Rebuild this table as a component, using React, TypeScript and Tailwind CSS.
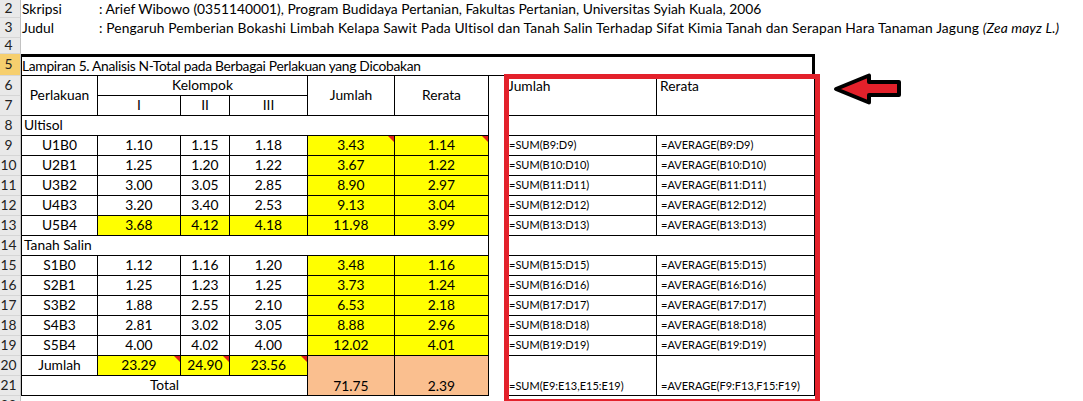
import React from "react";

type Row = [string, string, string, string, string, string];

const ultisol: Row[] = [
  ["U1B0", "1.10", "1.15", "1.18", "3.43", "1.14"],
  ["U2B1", "1.25", "1.20", "1.22", "3.67", "1.22"],
  ["U3B2", "3.00", "3.05", "2.85", "8.90", "2.97"],
  ["U4B3", "3.20", "3.40", "2.53", "9.13", "3.04"],
  ["U5B4", "3.68", "4.12", "4.18", "11.98", "3.99"],
];

const salin: Row[] = [
  ["S1B0", "1.12", "1.16", "1.20", "3.48", "1.16"],
  ["S2B1", "1.25", "1.23", "1.25", "3.73", "1.24"],
  ["S3B2", "1.88", "2.55", "2.10", "6.53", "2.18"],
  ["S4B3", "2.81", "3.02", "3.05", "8.88", "2.96"],
  ["S5B4", "4.00", "4.02", "4.00", "12.02", "4.01"],
];

const cell = "flex items-center justify-center border-r border-b border-black";
const aCell = "flex items-center justify-center border-l border-r border-b border-black";
const fCell = "flex items-center pl-[4px] text-[11px] whitespace-nowrap border-r border-b border-black";
const yellow = "bg-[#ffff00]";

const Tri = () => (
  <span className="absolute right-0 top-0 h-0 w-0 border-l-[6px] border-t-[6px] border-l-transparent border-t-[#e0201c]" />
);

function Hdr({ n, hl = false }: { n: number; hl?: boolean }) {
  return (
    <div
      className={
        hl
          ? "flex items-center justify-center pr-[3px] text-[#222] bg-[#f6cf6e] border-r border-b border-r-[#c2c2c2] border-b-[#d6d6d6]"
          : "flex items-center justify-center pr-[3px] text-[#222] bg-[#e9e9e9] border-r border-b border-r-[#c2c2c2] border-b-[#d6d6d6]"
      }
    >
      {n}
    </div>
  );
}

function DataRow({ r, d, yb, comment }: { r: number; d: Row; yb?: boolean; comment?: boolean }) {
  return (
    <>
      <Hdr n={r} />
      <div className={aCell}>{d[0]}</div>
      <div className={yb ? `${cell} ${yellow}` : cell}>{d[1]}</div>
      <div className={yb ? `${cell} ${yellow}` : cell}>{d[2]}</div>
      <div className={yb ? `${cell} ${yellow}` : cell}>{d[3]}</div>
      <div className={`${cell} ${yellow} relative`}>
        {d[4]}
        {comment && <Tri />}
      </div>
      <div className={`${cell} ${yellow} relative`}>
        {d[5]}
        {comment && <Tri />}
      </div>
      <div />
      <div className={fCell}>{`=SUM(B${r}:D${r})`}</div>
      <div className={fCell}>{`=AVERAGE(B${r}:D${r})`}</div>
      <div />
    </>
  );
}

export default function App() {
  return (
    <div className="relative h-[401px] w-[1083px] overflow-hidden bg-white text-black [font-family:Lato,sans-serif] text-[13.8px]">
      <div className="grid grid-cols-[21px_77px_83px_49px_78px_87px_94px_16px_152px_158px_1fr] grid-rows-[18px_20px_16px_22px_repeat(17,20px)]">
        {/* row 2 */}
        <Hdr n={2} />
        <div className="flex items-center pl-[1px]">Skripsi</div>
        <div className="col-span-9 flex items-center pl-[1px] whitespace-nowrap">
          : Arief Wibowo (0351140001), Program Budidaya Pertanian, Fakultas Pertanian, Universitas Syiah Kuala, 2006
        </div>
        {/* row 3 */}
        <Hdr n={3} />
        <div className="flex items-center pl-[1px]">Judul</div>
        <div className="col-span-9 flex items-center pl-[1px] whitespace-nowrap tracking-[0.13px]">
          <span>
            : Pengaruh Pemberian Bokashi Limbah Kelapa Sawit Pada Ultisol dan Tanah Salin Terhadap Sifat Kimia Tanah dan Serapan Hara Tanaman Jagung{" "}
            <i>(Zea mayz L.)</i>
          </span>
        </div>
        {/* row 4 */}
        <Hdr n={4} />
        <div className="col-span-10" />
        {/* row 5 */}
        <Hdr n={5} hl />
        <div className="col-span-9 flex items-center whitespace-nowrap tracking-[-0.3px] border-l border-b border-t-[3px] border-r-[3px] border-black">
          Lampiran 5. Analisis N-Total pada Berbagai Perlakuan yang Dicobakan
        </div>
        <div />
        {/* row 6 */}
        <Hdr n={6} />
        <div className={`${aCell} row-span-2`}>Perlakuan</div>
        <div className={`${cell} col-span-3`}>Kelompok</div>
        <div className={`${cell} row-span-2`}>Jumlah</div>
        <div className={`${cell} row-span-2`}>Rerata</div>
        <div />
        <div className="row-span-2 flex items-start pl-[3px] leading-[19px] border-r border-b border-black">Jumlah</div>
        <div className="row-span-2 flex items-start pl-[3px] leading-[19px] border-r border-b border-black">Rerata</div>
        <div />
        {/* row 7 */}
        <Hdr n={7} />
        <div className={cell}>I</div>
        <div className={cell}>II</div>
        <div className={cell}>III</div>
        <div />
        <div />
        {/* row 8 */}
        <Hdr n={8} />
        <div className="col-span-6 flex items-center pl-[2px] border-l border-r border-b border-black">Ultisol</div>
        <div />
        <div className="col-span-2 border-r border-b border-black" />
        <div />
        {ultisol.map((d, i) => (
          <DataRow key={d[0]} r={9 + i} d={d} yb={i === 4} comment={i === 0} />
        ))}
        {/* row 14 */}
        <Hdr n={14} />
        <div className="col-span-6 flex items-center pl-[2px] border-l border-r border-b border-black">Tanah Salin</div>
        <div />
        <div className="col-span-2 border-r border-b border-black" />
        <div />
        {salin.map((d, i) => (
          <DataRow key={d[0]} r={15 + i} d={d} />
        ))}
        {/* row 20 */}
        <Hdr n={20} />
        <div className={aCell}>Jumlah</div>
        <div className={`${cell} ${yellow} relative`}>
          23.29
          <Tri />
        </div>
        <div className={`${cell} ${yellow} relative`}>
          24.90
          <Tri />
        </div>
        <div className={`${cell} ${yellow} relative`}>
          23.56
          <Tri />
        </div>
        <div className="row-span-2 flex items-end justify-center leading-[19px] bg-[#fabf8f] border-r border-b border-black">71.75</div>
        <div className="row-span-2 flex items-end justify-center leading-[19px] bg-[#fabf8f] border-r border-b border-black">2.39</div>
        <div />
        <div className="row-span-2 flex items-end pl-[4px] text-[11px] leading-[19px] whitespace-nowrap border-r border-b border-black">
          =SUM(E9:E13,E15:E19)
        </div>
        <div className="row-span-2 flex items-end pl-[4px] text-[11px] leading-[19px] whitespace-nowrap border-r border-b border-black">
          =AVERAGE(F9:F13,F15:F19)
        </div>
        <div />
        {/* row 21 */}
        <Hdr n={21} />
        <div className={`${aCell} col-span-4`}>Total</div>
        <div />
        <div />
        {/* row 22 */}
        <Hdr n={22} />
        <div className="col-span-10" />
      </div>

      {/* red highlight rectangle */}
      <div className="pointer-events-none absolute left-[504px] top-[74px] h-[330px] w-[316px] border-[5px] border-[#e3212b]" />

      {/* arrow */}
      <svg className="absolute left-[828px] top-[68px]" width="80" height="42" viewBox="0 0 80 42">
        <polygon
          points="8,21 41,7.5 41,14 71,14 71,27 41,27 41,34.5"
          fill="#e3212b"
          stroke="#000"
          strokeWidth="4"
          strokeLinejoin="round"
        />
      </svg>
    </div>
  );
}
